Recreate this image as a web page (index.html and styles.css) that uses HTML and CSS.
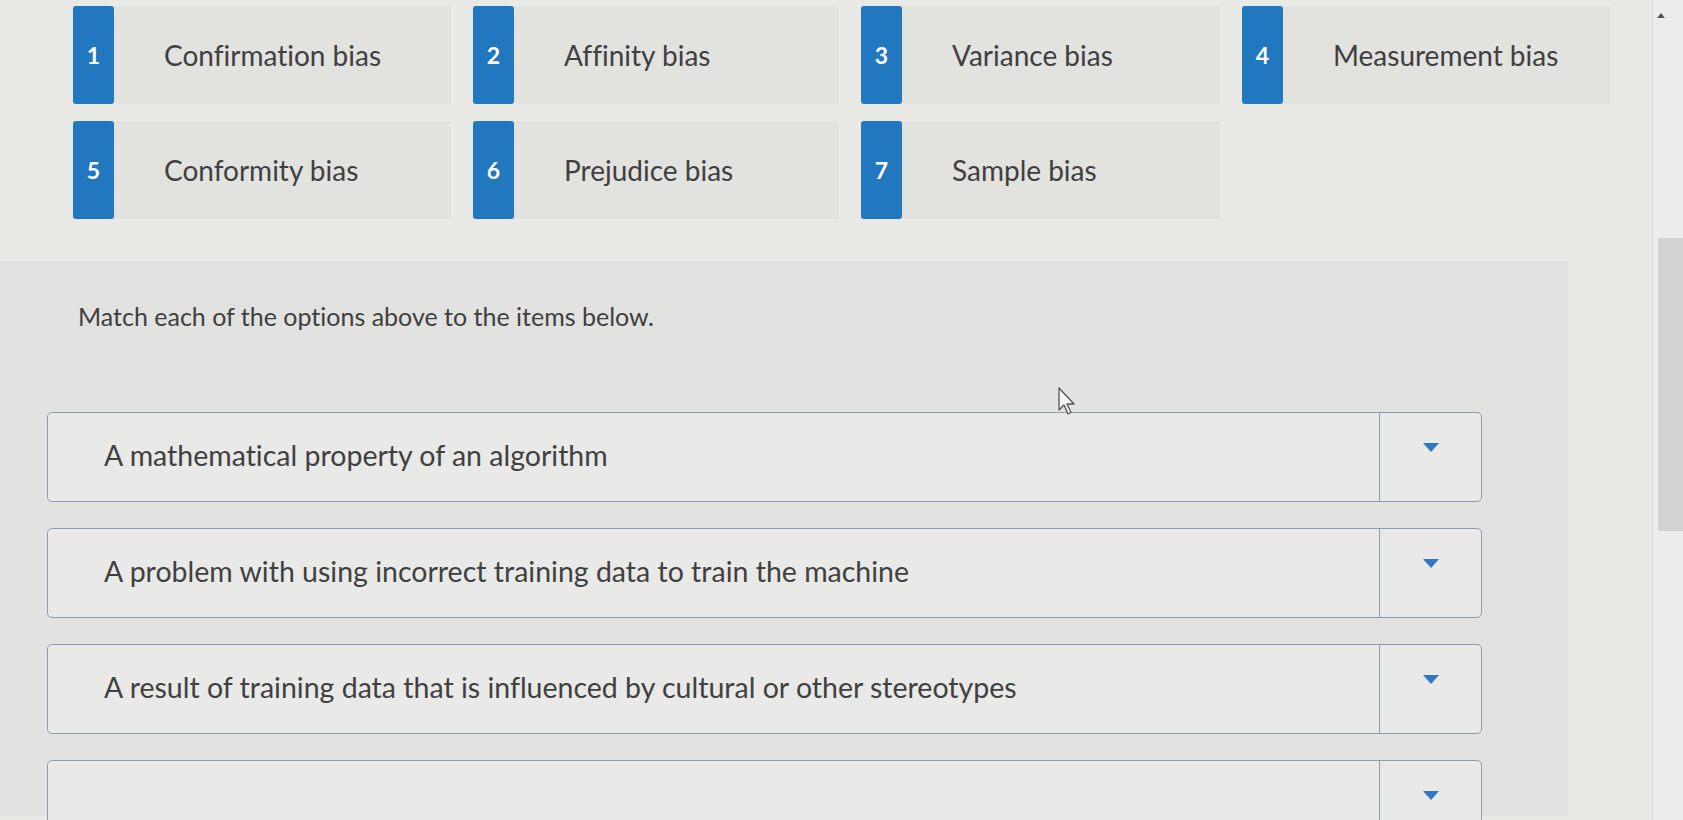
FILE: index.html
```html
<!DOCTYPE html>
<html lang="en">
<head>
    <meta charset="UTF-8">
    <meta name="viewport" content="width=device-width, initial-scale=1.0">
    <title>Matching Question</title>
    <link rel="stylesheet" href="styles.css">
</head>
<body>
    <div class="page">
        <div class="content">
            <div class="options">
                <div class="option"><span class="badge">1</span><span class="label">Confirmation bias</span></div>
                <div class="option"><span class="badge">2</span><span class="label">Affinity bias</span></div>
                <div class="option"><span class="badge">3</span><span class="label">Variance bias</span></div>
                <div class="option"><span class="badge">4</span><span class="label">Measurement bias</span></div>
                <div class="option"><span class="badge">5</span><span class="label">Conformity bias</span></div>
                <div class="option"><span class="badge">6</span><span class="label">Prejudice bias</span></div>
                <div class="option"><span class="badge">7</span><span class="label">Sample bias</span></div>
            </div>

            <div class="question">
                <p class="prompt">Match each of the options above to the items below.</p>

                <div class="match-list">
                    <div class="match">
                        <div class="match-text">A mathematical property of an algorithm</div>
                        <div class="match-select"><span class="caret"></span></div>
                    </div>
                    <div class="match">
                        <div class="match-text">A problem with using incorrect training data to train the machine</div>
                        <div class="match-select"><span class="caret"></span></div>
                    </div>
                    <div class="match">
                        <div class="match-text">A result of training data that is influenced by cultural or other stereotypes</div>
                        <div class="match-select"><span class="caret"></span></div>
                    </div>
                    <div class="match">
                        <div class="match-text">&nbsp;</div>
                        <div class="match-select"><span class="caret"></span></div>
                    </div>
                </div>
            </div>
        </div>

        <!-- fake scrollbar -->
        <div class="scrollbar">
            <span class="scroll-up"></span>
            <div class="scroll-thumb"></div>
        </div>
    </div>

    <!-- mouse pointer -->
    <svg class="cursor" width="22" height="30" viewBox="0 0 22 30">
        <path d="M2 2 L2 24 L7 19 L11 28 L14 26.5 L10 18 L17 18 Z" fill="#f4f4f2" stroke="#555" stroke-width="1.3" stroke-linejoin="round"/>
    </svg>
</body>
</html>
```

FILE: styles.css
```css
body {
    margin: 0;
    padding: 0;
    font-family: Lato, "Open Sans", sans-serif;
    font-variant-ligatures: none;
    background-color: #e9e9e6;
    color: #404040;
    overflow: hidden;
}
.page {
    display: flex;
    height: 820px;
}
.content {
    flex: 1;
}
.options {
    display: grid;
    grid-template-columns: 378px 366px 359px 368px;
    column-gap: 22px;
    row-gap: 17px;
    padding: 6px 0 0 73px;
}
.option {
    display: flex;
    align-items: center;
    height: 98px;
    background-color: #e2e2df;
}
.badge {
    align-self: stretch;
    width: 41px;
    display: flex;
    align-items: center;
    justify-content: center;
    background-color: #2178bf;
    border-radius: 3px;
    color: white;
    font-weight: bold;
    font-size: 23px;
}
.label {
    margin-left: 50px;
    font-size: 28px;
}
.question {
    margin: 42px 84px 0 0;
    padding: 40px 0 0 0;
    height: 515px;
    background-color: #e2e2e0;
}
.prompt {
    margin: 0 0 0 78px;
    font-size: 25px;
    line-height: 30px;
}
.match-list {
    display: flex;
    flex-direction: column;
    gap: 26px;
    margin: 81px 0 0 47px;
    width: 1435px;
}
.match {
    display: flex;
    height: 88px;
    background-color: #e9e9e7;
    border: 1px solid #8e9bb0;
    border-radius: 5px;
    flex-shrink: 0;
}
.match-text {
    flex: 1;
    display: flex;
    align-items: center;
    padding: 0 0 4px 56px;
    font-size: 28.5px;
    border-right: 1px solid #8e9bb0;
}
.match-select {
    width: 101px;
    display: flex;
    justify-content: center;
    padding-top: 30px;
    box-sizing: border-box;
}
.caret {
    width: 0;
    height: 0;
    border-left: 8px solid transparent;
    border-right: 8px solid transparent;
    border-top: 9px solid #2f78c4;
}
.scrollbar {
    width: 30px;
    background-color: #ececea;
    border-left: 1px solid #dcdcda;
    position: relative;
}
.scroll-up {
    position: absolute;
    top: 13px;
    left: 4px;
    border-left: 4px solid transparent;
    border-right: 4px solid transparent;
    border-bottom: 5px solid #555;
}
.scroll-thumb {
    margin: 238px 0 0 5px;
    height: 293px;
    background-color: #d2d2d0;
}
.cursor {
    position: absolute;
    left: 1057px;
    top: 386px;
}
```
